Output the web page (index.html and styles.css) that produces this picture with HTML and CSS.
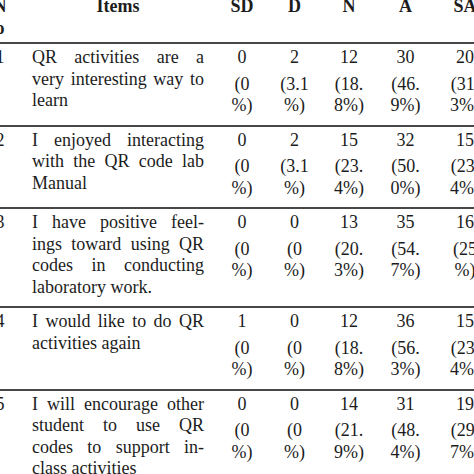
FILE: index.html
```html
<!DOCTYPE html>
<html lang="en">
<head>
  <meta charset="UTF-8">
  <meta name="viewport" content="width=device-width, initial-scale=1.0">
  <title>QR Activities Survey</title>
  <link rel="stylesheet" href="styles.css">
</head>
<body>
  <table class="survey">
    <thead>
      <tr>
        <th class="c-no">No</th>
        <th class="c-item">Items</th>
        <th class="c-sd">SD</th>
        <th class="c-d">D</th>
        <th class="c-n">N</th>
        <th class="c-a">A</th>
        <th class="c-sa">SA</th>
      </tr>
    </thead>
    <tbody>
      <tr>
        <td class="no">1</td>
        <td class="item"><span class="line">QR activities are a</span><span class="line">very interesting way to</span>learn</td>
        <td>0<div class="pct">(0<br>%)</div></td>
        <td>2<div class="pct">(3.1<br>%)</div></td>
        <td>12<div class="pct">(18.<br>8%)</div></td>
        <td>30<div class="pct">(46.<br>9%)</div></td>
        <td>20<div class="pct">(31.<br>3%)</div></td>
      </tr>
      <tr>
        <td class="no">2</td>
        <td class="item"><span class="line">I enjoyed interacting</span><span class="line">with the QR code lab</span>Manual</td>
        <td>0<div class="pct">(0<br>%)</div></td>
        <td>2<div class="pct">(3.1<br>%)</div></td>
        <td>15<div class="pct">(23.<br>4%)</div></td>
        <td>32<div class="pct">(50.<br>0%)</div></td>
        <td>15<div class="pct">(23.<br>4%)</div></td>
      </tr>
      <tr>
        <td class="no">3</td>
        <td class="item"><span class="line">I have positive feel-</span><span class="line">ings toward using QR</span><span class="line">codes in conducting</span>laboratory work.</td>
        <td>0<div class="pct">(0<br>%)</div></td>
        <td>0<div class="pct">(0<br>%)</div></td>
        <td>13<div class="pct">(20.<br>3%)</div></td>
        <td>35<div class="pct">(54.<br>7%)</div></td>
        <td>16<div class="pct">(25<br>%)</div></td>
      </tr>
      <tr>
        <td class="no">4</td>
        <td class="item"><span class="line">I would like to do QR</span>activities again</td>
        <td>1<div class="pct">(0<br>%)</div></td>
        <td>0<div class="pct">(0<br>%)</div></td>
        <td>12<div class="pct">(18.<br>8%)</div></td>
        <td>36<div class="pct">(56.<br>3%)</div></td>
        <td>15<div class="pct">(23.<br>4%)</div></td>
      </tr>
      <tr>
        <td class="no">5</td>
        <td class="item"><span class="line">I will encourage other</span><span class="line">student to use QR</span><span class="line">codes to support in-</span>class activities</td>
        <td>0<div class="pct">(0<br>%)</div></td>
        <td>0<div class="pct">(0<br>%)</div></td>
        <td>14<div class="pct">(21.<br>9%)</div></td>
        <td>31<div class="pct">(48.<br>4%)</div></td>
        <td>19<div class="pct">(29.<br>7%)</div></td>
      </tr>
    </tbody>
  </table>
</body>
</html>
```

FILE: styles.css
```css
* {
  box-sizing: border-box;
}
html, body {
  margin: 0;
}
body {
  background-color: #fff;
  overflow: hidden;
  font-family: "Liberation Serif", "Times New Roman", serif;
  font-size: 18px;
  line-height: 21.5px;
  color: #1c1c1c;
}
.survey {
  table-layout: fixed;
  border-collapse: separate;
  border-spacing: 0;
  width: 511px;
  margin: -7px 0 0 -15px;
}
th, td {
  padding: 3px 0 8px;
  vertical-align: top;
  text-align: center;
  border-bottom: 2px solid #474747;
}
th {
  padding-bottom: 3px;
  font-weight: bold;
}
.c-no { width: 30px; word-break: break-all; padding-left: 6px; padding-right: 6px; }
.c-item { width: 201px; padding-left: 17px; padding-right: 12px; }
.c-sd { width: 52px; }
.c-d { width: 53px; }
.c-n { width: 56px; }
.c-a { width: 57px; }
.c-sa { width: 62px; }
.no {
  padding-left: 6px;
  padding-right: 6px;
}
.item {
  text-align: left;
  padding-left: 17px;
  padding-right: 12px;
}
.line {
  display: block;
  text-align: justify;
  text-align-last: justify;
}
.pct {
  margin-top: 5px;
}
```
